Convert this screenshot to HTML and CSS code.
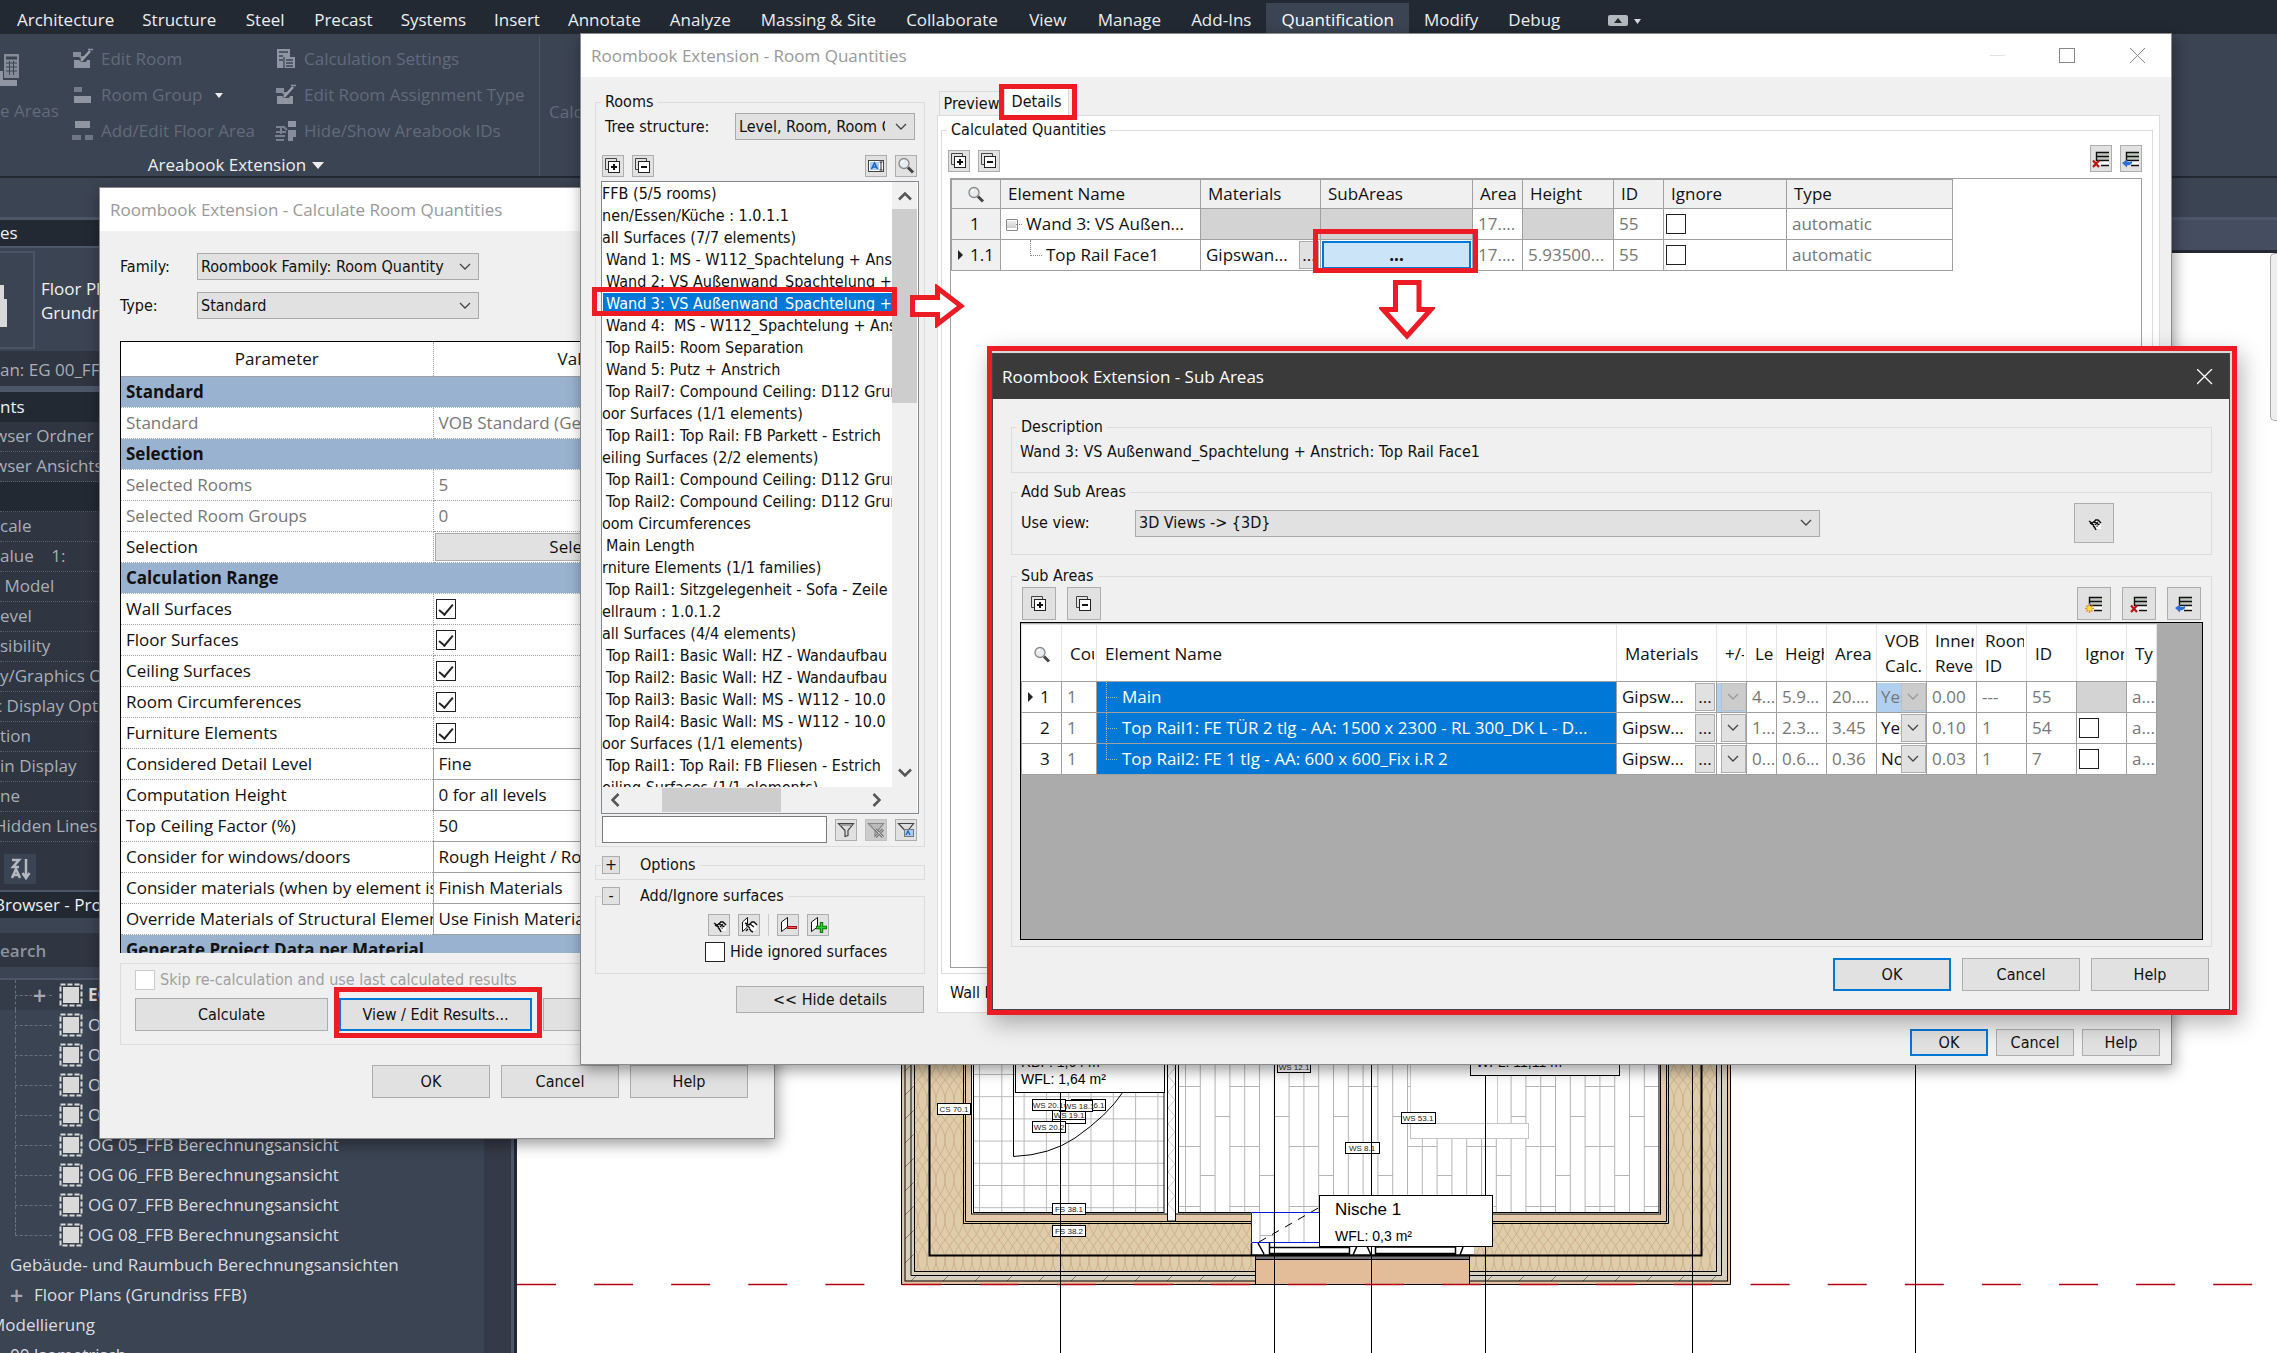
FILE: index.html
```
<!DOCTYPE html>
<html lang="en">
<head>
<meta charset="utf-8">
<title>Roombook Extension</title>
<link rel="stylesheet" href="styles.css">
</head>
<body>
<svg class="sprite" aria-hidden="true">
  <symbol id="i-expand" viewBox="0 0 18 18"><path d="M1.500 12.500V1.500H12.500V4M1.500 12.500H4" fill="none" stroke="#444"/><rect x="4.500" y="4.500" width="11" height="11" fill="#fff" stroke="#222"/><path d="M10 7V13M7 10H13" stroke="#111" stroke-width="2"/></symbol>
  <symbol id="i-collapse" viewBox="0 0 18 18"><path d="M1.500 12.500V1.500H12.500V4M1.500 12.500H4" fill="none" stroke="#444"/><rect x="4.500" y="4.500" width="11" height="11" fill="#fff" stroke="#222"/><path d="M7 10H13" stroke="#111" stroke-width="2"/></symbol>
  <symbol id="i-search" viewBox="0 0 18 18"><path d="M11 10.500L16 15.500" stroke="#444" stroke-width="3"/><circle cx="7" cy="6.500" r="5" fill="#e8ecee" stroke="#888" stroke-width="1.300"/><path d="M4.500 5.500A3 3 0 0 1 7 3.500" fill="none" stroke="#fff" stroke-width="1.500"/></symbol>
  <symbol id="i-rename" viewBox="0 0 18 18"><rect x="1.500" y="3.500" width="15" height="11" fill="#fff" stroke="#444"/><rect x="3" y="5" width="9" height="8" fill="#a8cdf5"/><path d="M4.500 12L7.500 6L10.500 12M5.500 10H9.500" fill="none" stroke="#1b5fc0" stroke-width="1.500"/><path d="M12.500 5H15.500M14 5V13M12.500 13H15.500" fill="none" stroke="#222"/></symbol>
  <symbol id="i-funnel" viewBox="0 0 18 18"><path d="M1.500 2.500H16.500L11 9.500V14.500L8 15.500V9.500Z" fill="#ddd" stroke="#444" stroke-width="1.200"/><path d="M3 4H15" stroke="#888" stroke-width="1.500"/></symbol>
  <symbol id="i-funnel-x" viewBox="0 0 18 18"><path d="M1.500 2.500H16.500L11 9.500V14.500L8 15.500V9.500Z" fill="#bbb" stroke="#888" stroke-width="1.200"/><path d="M8.500 8.500L16 16M16 8.500L8.500 16" stroke="#777" stroke-width="3"/><path d="M8.500 8.500L16 16M16 8.500L8.500 16" stroke="#ccc"/></symbol>
  <symbol id="i-funnel-a" viewBox="0 0 18 18"><path d="M1.500 2.500H16.500L11 9.500L8 13.500V9.500Z" fill="#ddd" stroke="#444" stroke-width="1.200"/><rect x="7.500" y="8.500" width="9" height="7" fill="#a8cdf5" stroke="#777"/><path d="M9 14L11 10L13 14" fill="none" stroke="#1b5fc0" stroke-width="1.300"/></symbol>
  <symbol id="i-hand" viewBox="0 0 18 18"><path d="M5 8L9 6L13 6L16 9V15H11L9 12Z" fill="#fff"/><path d="M4 7L7 9L11 6M5 9L9 11M10 6H13L16 9M8 11L10 14L11 16M10 8L14 11" fill="none" stroke="#111" stroke-width="1.500"/><path d="M10 10L13 13M12 8L15 11M9 8L12 11" fill="none" stroke="#111" stroke-width="1.300" stroke-dasharray="1.300 1"/></symbol>
  <symbol id="i-face-hand" viewBox="0 0 18 18"><path d="M2.500 15.500V6L7.500 1.500V11L2.500 15.500Z" fill="#fff" stroke="#111"/><path d="M6 7L9 9L12 6L16 8L17 12L14 15H10L8 12Z" fill="#fff"/><path d="M5 7L9 9L12 6H14L17 9M6 9L10 12M10 8L14 11M8 13L6 15M9 12L11 15L13 16" fill="none" stroke="#111" stroke-width="1.400"/></symbol>
  <symbol id="i-face-del" viewBox="0 0 18 18"><path d="M2.500 15.500V6L8.500 1.500V11L2.500 15.500Z" fill="#fff" stroke="#111"/><path d="M8 11.500H18" stroke="#a01010" stroke-width="3"/><path d="M9 11.500H17" stroke="#ef5b5b"/></symbol>
  <symbol id="i-face-add" viewBox="0 0 18 18"><path d="M2.500 15.500V6L8.500 1.500V11L2.500 15.500Z" fill="#fff" stroke="#111"/><path d="M7 11.500H18M12.500 6V17" stroke="#087a08" stroke-width="3.400"/><path d="M8 11.500H17M12.500 7V16" stroke="#2fd02f" stroke-width="1.400"/></symbol>
  <symbol id="i-rows" viewBox="0 0 18 18"><rect x="4" y="2" width="13" height="8" fill="#c2c7c0"/><rect x="4" y="10" width="13" height="5" fill="#fff"/><path d="M4.500 11V2.500H17M4.500 6.500H17M4.500 10.500H17M9 15.500H17" fill="none" stroke="#111" stroke-width="1.400"/></symbol>
  <symbol id="i-row-del" viewBox="0 0 18 18"><use href="#i-rows"/><path d="M1 10.500L7 17M7 10.500L1 17" stroke="#c01212" stroke-width="2.200"/></symbol>
  <symbol id="i-row-back" viewBox="0 0 18 18"><use href="#i-rows"/><path d="M0 13L5 9.500V11.500Q9 13 10 10.500Q11 15 5 15.500V17.500Z" fill="#2c6fd6"/></symbol>
  <symbol id="i-row-new" viewBox="0 0 18 18"><use href="#i-rows"/><path d="M4.500 8.500V18M0 13.500H9M1.500 10.500L7.500 16.500M7.500 10.500L1.500 16.500" stroke="#f08a1c" stroke-width="1.400"/><circle cx="4.500" cy="13.500" r="2.200" fill="#ffe23a"/></symbol>
  <symbol id="i-room-edit" viewBox="0 0 22 22"><path d="M1 4H9V8H13L10 12L7 9H1Z" fill="#868d98"/><path d="M2 12H7L9 14H14L15 12H18V20H2Z" fill="#8f96a1"/><path d="M9 13L18 3" fill="none" stroke="#9aa0aa" stroke-width="2.500"/><path d="M16 1.500H21" stroke="#8f96a1" stroke-width="1.500"/></symbol>
  <symbol id="i-room-group" viewBox="0 0 22 22"><path d="M2 3H10V8H2Z" fill="#737b88"/><path d="M2 12H19V19H2Z" fill="#8f96a1"/></symbol>
  <symbol id="i-floor-area" viewBox="0 0 22 22"><path d="M3 1H18V8H3Z" fill="#8f96a1"/><path d="M0 15H9V20H0ZM13 15H21V20H13Z" fill="#6f7785"/></symbol>
  <symbol id="i-calc-set" viewBox="0 0 22 22"><path d="M2 1H15V9H20V20H2Z" fill="#8f96a1"/><path d="M4 4H13M4 8H8M4 12H8M9 9V20M11 12H18M11 15H18M11 18H18" stroke="#3b4453" stroke-width="1.300"/></symbol>
  <symbol id="i-ids" viewBox="0 0 22 22"><path d="M13 1H21V7H13Z" fill="#8f96a1"/><path d="M13 10H21V17H18V21H13Z" fill="#868d98"/><path d="M1 7H9L12 10M1 12H11M0 16H10M1 20H9M6 8V14" fill="none" stroke="#79818d" stroke-width="2"/></symbol>
  <symbol id="i-sheet" viewBox="0 0 24 24"><rect x="1.500" y="1.500" width="21" height="21" fill="none" stroke="#d9d9d9" stroke-width="2" stroke-dasharray="5 2"/><rect x="4" y="4" width="16" height="16" fill="#d9d9d9"/></symbol>
</svg>

<nav class="menubar">
  <a href="#">Architecture</a><a href="#">Structure</a><a href="#">Steel</a><a href="#">Precast</a><a href="#">Systems</a><a href="#">Insert</a><a href="#">Annotate</a><a href="#">Analyze</a><a href="#">Massing &amp; Site</a><a href="#">Collaborate</a><a href="#">View</a><a href="#">Manage</a><a href="#">Add-Ins</a><a href="#" class="on">Quantification</a><a href="#">Modify</a><a href="#">Debug</a>
  <button class="ribbon-toggle" aria-label="Minimize ribbon"><svg width="34" height="14" viewBox="0 0 34 14"><rect x="1" y="1" width="20" height="11" rx="2" fill="#b4b8bf"/><path d="M7 9L11 4L15 9Z" fill="#222933"/><path d="M27 5H34L30.500 10Z" fill="#d5d8dc"/></svg></button>
</nav>

<header class="ribbon">
  <section class="panel">
    <div class="panel-body">
      <div class="big-tool">
        <svg width="22" height="36" viewBox="0 0 22 36"><path d="M0 18H3V27H17V33H0Z" fill="#8f96a1"/><rect x="4" y="1" width="15" height="24" fill="#858c98"/><path d="M6 5H17" stroke="#3b4453" stroke-width="3"/><path d="M6 10H17M6 14H17M6 18H17M9.500 8V22M13.500 8V22" stroke="#3b4453"/></svg>
        <span>e Areas</span>
      </div>
      <div class="tools">
        <button><svg><use href="#i-room-edit"/></svg>Edit Room</button>
        <button><svg><use href="#i-room-group"/></svg>Room Group <i class="caret small"></i></button>
        <button><svg><use href="#i-floor-area"/></svg>Add/Edit Floor Area</button>
      </div>
      <div class="tools">
        <button><svg><use href="#i-calc-set"/></svg>Calculation Settings</button>
        <button><svg><use href="#i-room-edit"/></svg>Edit Room Assignment Type</button>
        <button><svg><use href="#i-ids"/></svg>Hide/Show Areabook IDs</button>
      </div>
    </div>
    <div class="panel-title">Areabook Extension <i class="caret"></i></div>
  </section>
  <section class="panel next"><span>Calc</span></section>
</header>
<div class="optionbar"></div>

<main class="workspace">
  <aside class="dock">
    <h2>es</h2>
    <div class="type-card">
      <div class="thumb"><svg width="8" height="44" viewBox="0 0 8 44"><path d="M0 0H4V14H7V42H0Z" fill="#d9d9d9"/></svg></div>
      <p>Floor Plan<br>Grundriss</p>
    </div>
    <div class="instance">an: EG 00_FFB</div>
    <h2 class="head-tall">nts</h2>
    <ul class="props">
      <li class="scrolled">wser Ordner</li><li class="scrolled">wser Ansichts</li><li class="group"></li><li>cale</li><li>alue&nbsp;&nbsp;&nbsp; 1:</li><li>&nbsp;Model</li><li>evel</li><li>sibility</li><li>y/Graphics O</li><li class="scrolled">c Display Opt</li><li>tion</li><li>in Display</li><li>ne</li><li class="scrolled">Hidden Lines</li>
    </ul>
    <div class="sortbar"><button aria-label="Sort"><svg width="24" height="24" viewBox="0 0 24 24"><path d="M4 3H11L5 10H11M4 21L8 12L12 21M5 18H11" fill="none" stroke="#b4b8bf" stroke-width="2.500"/><path d="M18 2V20M14.500 16L18 21L21.500 16" fill="none" stroke="#b4b8bf" stroke-width="2.500"/></svg></button></div>
    <h2 class="scrolled">Browser - Project</h2>
    <div class="searchbar"><input type="text" value="earch" aria-label="Search"></div>
    <div class="browser">
      <ul class="tree">
        <li class="leaf current"><b class="plus">+</b><svg><use href="#i-sheet"/></svg><b>EG 00_FFB</b></li>
        <li class="leaf"><svg><use href="#i-sheet"/></svg>OG 01_FFB Berechnungsansicht</li>
        <li class="leaf"><svg><use href="#i-sheet"/></svg>OG 02_FFB Berechnungsansicht</li>
        <li class="leaf"><svg><use href="#i-sheet"/></svg>OG 03_FFB Berechnungsansicht</li>
        <li class="leaf"><svg><use href="#i-sheet"/></svg>OG 04_FFB Berechnungsansicht</li>
        <li class="leaf"><svg><use href="#i-sheet"/></svg>OG 05_FFB Berechnungsansicht</li>
        <li class="leaf"><svg><use href="#i-sheet"/></svg>OG 06_FFB Berechnungsansicht</li>
        <li class="leaf"><svg><use href="#i-sheet"/></svg>OG 07_FFB Berechnungsansicht</li>
        <li class="leaf last"><svg><use href="#i-sheet"/></svg>OG 08_FFB Berechnungsansicht</li>
        <li class="l1">Gebäude- und Raumbuch Berechnungsansichten</li>
        <li class="l1"><b class="plus">+</b>Floor Plans (Grundriss FFB)</li>
        <li class="l0">Modellierung</li>
        <li class="l1">00 Isometrisch</li>
      </ul>
      <div class="dock-scroll"></div>
    </div>
  </aside>
  <section class="canvas">
    <div class="viewtabs"></div>
    <div class="navbar"></div>
    <svg class="plan" viewBox="517 1053 1760 300" font-family="Liberation Sans, Arial, sans-serif">
      <defs>
        <pattern id="wool" width="18" height="40" patternUnits="userSpaceOnUse"><rect width="18" height="40" fill="#dfccab"/><path d="M0 0Q9 10 9 20Q9 30 0 40M18 0Q9 10 9 20Q9 30 18 40M9 0Q0 10 0 20Q0 30 9 40M9 0Q18 10 18 20Q18 30 9 40" fill="none" stroke="#cdb28c"/></pattern>
        <pattern id="brick" width="32" height="24" patternUnits="userSpaceOnUse"><rect width="32" height="24" fill="#d7d0bd"/><path d="M0 24L12 12M12 12L20 4" stroke="#8c7a6c"/></pattern>
        <pattern id="tile" x="979" y="1074" width="22.300" height="22.200" patternUnits="userSpaceOnUse"><rect width="22.300" height="22.200" fill="#fff"/><path d="M.5 0V22.200M0 .5H22.300" stroke="#b9b9b9"/></pattern>
        <pattern id="plank" x="1185" y="1064" width="59.200" height="120" patternUnits="userSpaceOnUse"><rect width="59.200" height="120" fill="#fff"/><path d="M.5 0V120M15.300 0V120M30.100 0V120M44.900 0V120M0 82.500H15M15 111.500H30M30 52.500H45M45 82.500H59M0 22.500H15M45 22.500H59" stroke="#b4b4b4"/></pattern>
      </defs>
      <rect x="901" y="1053" width="829.500" height="231" fill="#e6c3a0"/>
      <rect x="905" y="1053" width="822.500" height="228" fill="url(#brick)" stroke="#000"/>
      <path d="M911 1053V1275.500H1721.500V1053" fill="none" stroke="#000"/>
      <rect x="914.500" y="1053" width="802" height="218.500" fill="url(#wool)" stroke="#000"/>
      <path d="M929.500 1053V1255.500H1701.500V1053" fill="none" stroke="#000" stroke-width="2"/>
      <path d="M966 1053H1666V1221H966Z" fill="#e3c9a9"/>
      <path d="M963.500 1053V1223.500H1668.500V1053M965.500 1053V1221.500H1666.500V1053" fill="none" stroke="#000"/>
      <rect x="971.500" y="1053" width="689" height="161" fill="#fff" stroke="#000"/>
      <rect x="973.500" y="1053" width="190.500" height="159.500" fill="url(#tile)" stroke="#000"/>
      <rect x="1178.500" y="1053" width="480.500" height="159.500" fill="url(#plank)" stroke="#000"/>
      <rect x="1167.500" y="1053" width="8" height="168" fill="#fff" stroke="#000"/>
      <path d="M1168 1060L1175 1068L1168 1076L1175 1084L1168 1092L1175 1100L1168 1108L1175 1116L1168 1124L1175 1132L1168 1140L1175 1148L1168 1156L1175 1164L1168 1172L1175 1180L1168 1188L1175 1196L1168 1204L1175 1212" fill="none" stroke="#ccc"/>
      <rect x="1410.500" y="1053" width="87" height="80" fill="#fff" stroke="#ccc"/>
      <rect x="1410.500" y="1123.500" width="118" height="15" fill="#fff" stroke="#c4c4c4"/>
      <path d="M901.500 1053V1284.500H1730.500V1053" fill="none" stroke="#000"/>
      <rect x="1251" y="1212" width="223" height="43" fill="#fff"/>
      <path d="M1260 1213V1242M1274 1213V1242M1289 1213V1242M1304 1213V1242M1260 1235.500H1274" stroke="#b4b4b4"/>
      <path d="M1251.500 1242.500V1212.500H1325M1251.500 1242.500H1325" fill="none" stroke="#0018e8"/>
      <path d="M1259 1242L1320 1207" stroke="#000" stroke-dasharray="8 7"/>
      <path d="M1251.500 1243V1255H1474M1258 1243L1264 1254M1269.500 1242V1255M1269.500 1247.500H1349.500M1269.500 1253.500H1349.500V1247M1357 1246L1353 1255M1367 1246L1371 1255M1375.500 1247V1253.500H1455.500V1247H1375.500M1463 1247L1460 1255" fill="none" stroke="#000" stroke-width="1.500"/>
      <rect x="1255.500" y="1256" width="214" height="28.500" fill="#e3bd9a" stroke="#000"/>
      <rect x="1255.500" y="1256" width="214" height="3.500" fill="#777" stroke="#000"/>
      <path d="M517 1284.500H2277" stroke="#b00010" stroke-width="1.500" stroke-dasharray="39 38.100"/>
      <path d="M1013.500 1053V1156.500Q1050 1155 1075 1138Q1108 1115 1123 1092" fill="none" stroke="#000"/>
      <rect x="1015.500" y="1043" width="149" height="49.500" fill="#fff" stroke="#000"/>
      <rect x="1470.500" y="1043" width="149" height="32.500" fill="#fff" stroke="#000"/>
      <g font-size="14"><text x="1021" y="1067">RBF: 1,64 m²</text><text x="1021" y="1084">WFL: 1,64 m²</text><text x="1476" y="1067">WFL: 11,11 m²</text></g>
      <g fill="#fff" stroke="#000">
        <rect x="937.500" y="1103.500" width="33" height="11"/><rect x="1052.500" y="1112.500" width="33" height="11"/><rect x="1052.500" y="1108.500" width="33" height="11"/><rect x="1071.500" y="1099.500" width="34" height="11"/><rect x="1059.500" y="1100.500" width="33" height="11"/><rect x="1032.500" y="1099.500" width="33" height="11"/><rect x="1032.500" y="1121.500" width="33" height="11"/><rect x="1052.500" y="1203.500" width="33" height="11"/><rect x="1052.500" y="1225.500" width="33" height="11"/><rect x="1277.500" y="1061.500" width="33" height="11"/><rect x="1345.500" y="1142.500" width="34" height="11"/><rect x="1401.500" y="1112.500" width="34" height="11"/>
      </g>
      <g font-size="8" text-anchor="middle" fill="#222"><text x="954" y="1112">CS 70.1</text><text x="1069" y="1118">WS 19.1</text><text x="1099" y="1108">6.1</text><text x="1079" y="1109">WS 18.1</text><text x="1048" y="1108">WS 20.1</text><text x="1049" y="1130">WS 20.2</text><text x="1069" y="1212">FS 38.1</text><text x="1069" y="1234">FS 38.2</text><text x="1294" y="1070">WS 12.1</text><text x="1362" y="1151">WS 8.1</text><text x="1418" y="1121">WS 53.1</text></g>
      <path d="M1060.500 1093V1353M1274.500 1053V1353M1371.500 1053V1353M1485.500 1076V1353M1692.500 1053V1353M1915.500 1053V1353" stroke="#000"/>
      <rect x="1319.500" y="1195.500" width="173" height="51" fill="#fff" stroke="#000"/>
      <text x="1335" y="1215" font-size="17">Nische 1</text><text x="1335" y="1241" font-size="14">WFL: 0,3 m²</text>
    </svg>
  </section>
</main>

<section class="window calc">
  <header class="titlebar">Roombook Extension - Calculate Room Quantities</header>
  <div class="calc-body">
    <div class="form-row"><label for="family">Family:</label><select id="family"><option>Roombook Family: Room Quantity</option></select></div>
    <div class="form-row"><label for="type">Type:</label><select id="type"><option>Standard</option></select></div>
    <div class="param-box">
      <table class="params">
        <thead><tr><th>Parameter</th><th>Value</th></tr></thead>
        <tbody>
          <tr class="band"><th colspan="2">Standard</th></tr>
          <tr class="off"><td>Standard</td><td>VOB Standard (Germany)</td></tr>
          <tr class="band"><th colspan="2">Selection</th></tr>
          <tr class="off"><td>Selected Rooms</td><td>5</td></tr>
          <tr class="off"><td>Selected Room Groups</td><td>0</td></tr>
          <tr><td>Selection</td><td class="fill"><button>Select...</button></td></tr>
          <tr class="band"><th colspan="2">Calculation Range</th></tr>
          <tr><td><label for="c1">Wall Surfaces</label></td><td class="tick"><input type="checkbox" id="c1" checked></td></tr>
          <tr><td><label for="c2">Floor Surfaces</label></td><td class="tick"><input type="checkbox" id="c2" checked></td></tr>
          <tr><td><label for="c3">Ceiling Surfaces</label></td><td class="tick"><input type="checkbox" id="c3" checked></td></tr>
          <tr><td><label for="c4">Room Circumferences</label></td><td class="tick"><input type="checkbox" id="c4" checked></td></tr>
          <tr><td><label for="c5">Furniture Elements</label></td><td class="tick"><input type="checkbox" id="c5" checked></td></tr>
          <tr><td>Considered Detail Level</td><td class="combo">Fine</td></tr>
          <tr><td>Computation Height</td><td class="combo">0 for all levels</td></tr>
          <tr><td>Top Ceiling Factor (%)</td><td>50</td></tr>
          <tr><td>Consider for windows/doors</td><td class="combo">Rough Height / Rough Width</td></tr>
          <tr><td>Consider materials (when by element is</td><td class="combo">Finish Materials</td></tr>
          <tr><td>Override Materials of Structural Elements</td><td class="combo">Use Finish Materials</td></tr>
          <tr class="band"><th colspan="2">Generate Project Data per Material</th></tr>
        </tbody>
      </table>
    </div>
    <fieldset class="run">
      <label class="check off"><input type="checkbox" disabled>Skip re-calculation and use last calculated results</label>
      <div class="run-buttons">
        <button class="btn">Calculate</button>
        <div class="marked"><button class="btn primary">View / Edit Results...</button><i class="mark"></i></div>
        <button class="btn" aria-label="Export"></button>
      </div>
    </fieldset>
    <footer class="actions"><button class="btn">OK</button><button class="btn">Cancel</button><button class="btn">Help</button></footer>
  </div>
</section>

<section class="window rooms">
  <header class="titlebar">Roombook Extension - Room Quantities
    <div class="controls"><svg width="156" height="16" viewBox="0 0 156 16" fill="none"><path d="M0 7.500H15" stroke="#e2e2e2"/><rect x="69.500" y=".5" width="15" height="14" stroke="#888"/><path d="M140 0L155 15M155 0L140 15" stroke="#888"/></svg></div>
  </header>
  <div class="rooms-body">
    <div class="side">
      <fieldset class="room-list">
        <legend>Rooms</legend>
        <div class="form-row"><label for="structure">Tree structure:</label><select id="structure"><option>Level, Room, Room Category</option></select></div>
        <div class="toolbar">
          <button class="icon" aria-label="Expand all"><svg><use href="#i-expand"/></svg></button>
          <button class="icon" aria-label="Collapse all"><svg><use href="#i-collapse"/></svg></button>
          <span class="push"></span>
          <button class="icon" aria-label="Rename"><svg><use href="#i-rename"/></svg></button>
          <button class="icon" aria-label="Search"><svg><use href="#i-search"/></svg></button>
        </div>
        <div class="listbox">
          <ul>
            <li class="up">FFB (5/5 rooms)</li><li class="up">nen/Essen/Küche : 1.0.1.1</li><li class="up">all Surfaces (7/7 elements)</li>
            <li>Wand 1: MS - W112_Spachtelung + Anstrich</li><li>Wand 2: VS Außenwand_Spachtelung + Anstrich</li><li class="sel"><span>Wand 3: VS Außenwand_Spachtelung + Anstrich</span></li><li>Wand 4:&nbsp; MS - W112_Spachtelung + Anstrich</li>
            <li>Top Rail5: Room Separation</li><li>Wand 5: Putz + Anstrich</li><li>Top Rail7: Compound Ceiling: D112 Grundputz</li>
            <li class="up">oor Surfaces (1/1 elements)</li><li>Top Rail1: Top Rail: FB Parkett - Estrich</li>
            <li class="up">eiling Surfaces (2/2 elements)</li><li>Top Rail1: Compound Ceiling: D112 Grundputz</li><li>Top Rail2: Compound Ceiling: D112 Grundputz</li>
            <li class="up">oom Circumferences</li><li>Main Length</li><li class="up">rniture Elements (1/1 families)</li><li>Top Rail1: Sitzgelegenheit - Sofa - Zeile</li>
            <li class="up">ellraum : 1.0.1.2</li><li class="up">all Surfaces (4/4 elements)</li>
            <li>Top Rail1: Basic Wall: HZ - Wandaufbau</li><li>Top Rail2: Basic Wall: HZ - Wandaufbau</li><li>Top Rail3: Basic Wall: MS - W112 - 10.0</li><li>Top Rail4: Basic Wall: MS - W112 - 10.0</li>
            <li class="up">oor Surfaces (1/1 elements)</li><li>Top Rail1: Top Rail: FB Fliesen - Estrich</li><li class="up">eiling Surfaces (1/1 elements)</li>
          </ul>
          <div class="vscroll"><svg width="14" height="9" viewBox="0 0 14 9"><path d="M1 7.500L7 1.500L13 7.500" fill="none" stroke="#555" stroke-width="2.500"/></svg><i></i><svg width="14" height="9" viewBox="0 0 14 9"><path d="M1 1.500L7 7.500L13 1.500" fill="none" stroke="#555" stroke-width="2.500"/></svg></div>
          <div class="hscroll"><svg width="9" height="14" viewBox="0 0 9 14"><path d="M7.500 1L1.500 7L7.500 13" fill="none" stroke="#555" stroke-width="2.500"/></svg><i></i><svg width="9" height="14" viewBox="0 0 9 14"><path d="M1.500 1L7.500 7L1.500 13" fill="none" stroke="#555" stroke-width="2.500"/></svg></div>
        </div>
        <div class="filter"><input type="text" aria-label="Filter rooms">
          <button class="icon" aria-label="Filter"><svg><use href="#i-funnel"/></svg></button>
          <button class="icon dim" aria-label="Clear filter"><svg><use href="#i-funnel-x"/></svg></button>
          <button class="icon" aria-label="Filter by name"><svg><use href="#i-funnel-a"/></svg></button>
        </div>
      </fieldset>
      <fieldset class="fold"><legend><button class="toggle">+</button>Options</legend></fieldset>
      <fieldset class="fold open"><legend><button class="toggle">-</button>Add/Ignore surfaces</legend>
        <div class="toolbar">
          <button class="icon" aria-label="Pick"><svg><use href="#i-hand"/></svg></button>
          <button class="icon" aria-label="Pick face"><svg><use href="#i-face-hand"/></svg></button>
          <hr>
          <button class="icon" aria-label="Remove face"><svg><use href="#i-face-del"/></svg></button>
          <button class="icon" aria-label="Add face"><svg><use href="#i-face-add"/></svg></button>
        </div>
        <label class="check"><input type="checkbox">Hide ignored surfaces</label>
      </fieldset>
      <button class="btn hide-details">&lt;&lt; Hide details</button>
    </div>
    <div class="details">
      <div class="tabs"><button>Preview</button><button class="on">Details</button><i class="mark"></i></div>
      <div class="tabpage">
        <fieldset class="quantities">
          <legend>Calculated Quantities</legend>
          <div class="toolbar">
            <button class="icon" aria-label="Expand all"><svg><use href="#i-expand"/></svg></button>
            <button class="icon" aria-label="Collapse all"><svg><use href="#i-collapse"/></svg></button>
            <span class="push"></span>
            <button class="icon tall" aria-label="Delete row"><svg><use href="#i-row-del"/></svg></button>
            <button class="icon tall" aria-label="Reset row"><svg><use href="#i-row-back"/></svg></button>
          </div>
          <div class="sheet">
            <table class="grid qty">
              <colgroup><col class="w-no"><col class="w-name"><col class="w-mat"><col class="w-sub"><col class="w-s"><col class="w-height"><col class="w-s"><col class="w-ign"><col class="w-type"></colgroup>
              <thead><tr><th class="mid"><svg class="glass"><use href="#i-search"/></svg></th><th>Element Name</th><th>Materials</th><th>SubAreas</th><th>Area</th><th>Height</th><th>ID</th><th>Ignore</th><th>Type</th></tr></thead>
              <tbody>
                <tr><th>1</th><td class="ink node">Wand 3: VS Außen...</td><td class="na"></td><td class="na"></td><td>17....</td><td class="na"></td><td>55</td><td class="tick"><input type="checkbox" aria-label="Ignore 1"></td><td>automatic</td></tr>
                <tr><th class="cur">1.1</th><td class="ink child">Top Rail Face1</td><td class="ink"><div class="with-btn">Gipswan...<button>...</button></div></td><td class="fill"><button class="sub">...</button></td><td>17....</td><td>5.93500...</td><td>55</td><td class="tick"><input type="checkbox" aria-label="Ignore 1.1"></td><td>automatic</td></tr>
              </tbody>
            </table>
          </div>
        </fieldset>
        <p class="status">Wall Height</p>
      </div>
    </div>
  </div>
  <footer class="actions"><button class="btn primary">OK</button><button class="btn">Cancel</button><button class="btn">Help</button></footer>
</section>

<i class="mark mark-row"></i>
<i class="mark mark-sub"></i>
<svg class="arrow arrow-right" width="58" height="44" viewBox="0 0 58 44"><path d="M5.500 13.500H30.500V4L54 22L30.500 40V30.500H5.500Z" fill="#fff" stroke="#ed1c24" stroke-width="5"/></svg>
<svg class="arrow arrow-down" width="56" height="62" viewBox="0 0 56 62"><path d="M16.500 4.500H40V31.500H52L28 58L4 31.500H16.500Z" fill="#fff" stroke="#ed1c24" stroke-width="5"/></svg>

<div class="callout">
<section class="window sub-areas">
  <header class="titlebar">Roombook Extension - Sub Areas<svg width="16" height="16" viewBox="0 0 16 16"><path d="M0 0L15 15M15 0L0 15" stroke="#fff" stroke-width="1.300"/></svg></header>
  <div class="sub-body">
    <fieldset class="desc"><legend>Description</legend><p>Wand 3: VS Außenwand_Spachtelung + Anstrich: Top Rail Face1</p></fieldset>
    <fieldset class="add"><legend>Add Sub Areas</legend>
      <div class="add-row"><label for="view">Use view:</label><select id="view"><option>3D Views -&gt; {3D}</option></select><button class="icon big" aria-label="Pick"><svg><use href="#i-hand"/></svg></button></div>
    </fieldset>
    <fieldset class="areas"><legend>Sub Areas</legend>
      <div class="toolbar">
        <button class="icon mid-size" aria-label="Expand all"><svg><use href="#i-expand"/></svg></button>
        <button class="icon mid-size" aria-label="Collapse all"><svg><use href="#i-collapse"/></svg></button>
        <span class="push"></span>
        <button class="icon mid-size" aria-label="New row"><svg><use href="#i-row-new"/></svg></button>
        <button class="icon mid-size" aria-label="Delete row"><svg><use href="#i-row-del"/></svg></button>
        <button class="icon mid-size" aria-label="Reset row"><svg><use href="#i-row-back"/></svg></button>
      </div>
      <div class="area-sheet">
        <table class="grid area-table">
          <colgroup><col class="w-idx"><col class="w-cnt"><col class="w-long"><col class="w-matl"><col class="w-sign"><col class="w-sign"><col class="w-s"><col class="w-s"><col class="w-s"><col class="w-s"><col class="w-s"><col class="w-s"><col class="w-s"><col class="w-end"></colgroup>
          <thead><tr><th class="mid"><svg class="glass"><use href="#i-search"/></svg></th><th><div>Count</div></th><th><div>Element Name</div></th><th><div>Materials</div></th><th><div>+/-</div></th><th><div>Length</div></th><th><div>Height</div></th><th><div>Area</div></th><th><div>VOB<br>Calc.</div></th><th><div>Inner<br>Reveal</div></th><th><div>Room<br>ID</div></th><th><div>ID</div></th><th><div>Ignore</div></th><th><div>Type</div></th></tr></thead>
          <tbody>
            <tr><th class="cur">1</th><td>1</td><td class="blue">Main</td><td class="ink"><div class="with-btn">Gipsw...<button>...</button></div></td><td class="pick"><select disabled aria-label="Sign"><option>&nbsp;</option></select></td><td>4...</td><td>5.9...</td><td>20....</td><td class="pick"><select disabled aria-label="VOB"><option>Yes</option></select></td><td>0.00</td><td>---</td><td>55</td><td class="na"></td><td>a...</td></tr>
            <tr><th>2</th><td>1</td><td class="blue">Top Rail1: FE TÜR 2 tlg - AA: 1500 x 2300 - RL 300_DK L - D...</td><td class="ink"><div class="with-btn">Gipsw...<button>...</button></div></td><td class="pick"><select aria-label="Sign"><option>&nbsp;</option></select></td><td>1...</td><td>2.3...</td><td>3.45</td><td class="pick"><select aria-label="VOB"><option>Yes</option></select></td><td>0.10</td><td>1</td><td>54</td><td class="tick"><input type="checkbox" aria-label="Ignore 2"></td><td>a...</td></tr>
            <tr><th>3</th><td>1</td><td class="blue end">Top Rail2: FE 1 tlg - AA: 600 x 600_Fix i.R 2</td><td class="ink"><div class="with-btn">Gipsw...<button>...</button></div></td><td class="pick"><select aria-label="Sign"><option>&nbsp;</option></select></td><td>0...</td><td>0.6...</td><td>0.36</td><td class="pick"><select aria-label="VOB"><option>No</option></select></td><td>0.03</td><td>1</td><td>7</td><td class="tick"><input type="checkbox" aria-label="Ignore 3"></td><td>a...</td></tr>
          </tbody>
        </table>
      </div>
    </fieldset>
    <footer class="actions"><button class="btn primary">OK</button><button class="btn">Cancel</button><button class="btn">Help</button></footer>
  </div>
</section>
</div>
</body>
</html>
```
FILE: styles.css
```
:root {
  --segoe: "Open Sans", "Noto Sans", sans-serif;
  --tahoma: "DejaVu Sans Condensed", "DejaVu Sans", sans-serif;
  --ink: #111;
  --navy: #222933;
  --slate: #3b4453;
  --deep: #2f3541;
  --edge: #4c586a;
  --face: #f0f0f0;
  --red: #ed1c24;
  --blue: #0078d7;
  --line: #a0a0a0;
}
* { box-sizing: border-box; }
html, body { height: 100%; }
body { margin: 0; display: flex; flex-direction: column; position: relative; overflow: hidden; background: #fff; font: 17px/22px var(--segoe); color: var(--ink); }
ul { list-style: none; margin: 0; padding: 0; }
p { margin: 0; }
button, select, input { font: inherit; color: inherit; margin: 0; }
button { padding: 0; border: 0; background: none; }
a { color: inherit; text-decoration: none; }
.sprite { position: absolute; width: 0; height: 0; }

/* application frame */
.menubar { flex: none; height: 34px; display: flex; padding: 3px 0 0 3px; background: var(--navy); color: #eceef0; }
.menubar a { padding: 6px 14px 0; white-space: nowrap; min-width: 70px; text-align: center; }
.menubar a:nth-child(n+8) { padding: 6px 15px 0; }
.menubar .on { background: var(--slate); color: #fff; }
.ribbon-toggle { margin-left: 32px; display: flex; align-items: center; padding-top: 4px; }
.ribbon { flex: none; height: 144px; display: flex; background: var(--slate); border-bottom: 2px solid var(--navy); color: #626b79; }
.panel { width: 540px; margin-top: 2px; border-right: 1px solid #4b5565; }
.panel-body { display: flex; height: 112px; padding-top: 5px; }
.big-tool { width: 72px; padding-top: 12px; display: flex; flex-direction: column; gap: 11px; }
.tools { width: 203px; }
.tools button { display: flex; align-items: center; gap: 7px; height: 36px; white-space: nowrap; }
.tools svg { width: 22px; height: 22px; }
.caret { border: 6px solid transparent; border-top: 7px solid #eee; border-bottom: 0; margin-left: 6px; }
.caret.small { border-width: 5px 4px 0; }
.panel-title { display: flex; align-items: center; justify-content: center; padding-right: 67px; height: 34px; color: #eceef0; }
.panel.next { border: 0; padding: 65px 0 0 9px; }
.optionbar { flex: none; height: 42px; background: var(--slate); border-bottom: 3px solid var(--edge); }
.workspace { flex: 1; min-height: 0; display: flex; }

/* docked palettes */
.dock { width: 517px; flex: none; display: flex; flex-direction: column; overflow: hidden; background: var(--slate); border-right: 3px solid var(--navy); box-shadow: inset -3px 0 var(--edge); color: #a9aeb7; }
.dock h2 { flex: none; margin: 0; height: 26px; font: inherit; line-height: 26px; background: var(--navy); color: #f0f1f3; white-space: nowrap; }
.dock .head-tall { height: 30px; line-height: 30px; }
.dock .scrolled { text-indent: -6px; }
.type-card { flex: none; display: flex; height: 105px; border-top: 2px solid var(--edge); padding: 3px 0 2px; }
.thumb { width: 35px; border: 2px solid #4b5565; border-left: 0; display: flex; align-items: center; padding-top: 14px; }
.type-card p { padding: 26px 0 0 6px; line-height: 24px; color: #f0f1f3; }
.instance { flex: none; height: 41px; padding-top: 8px; background: var(--deep); border-bottom: 6px solid var(--edge); }
.props { flex: none; }
.props li { height: 30px; line-height: 28px; background: var(--deep); border-bottom: 1px dotted #565e6c; white-space: nowrap; }
.props .group { background: var(--navy); }
.sortbar { flex: none; height: 50px; padding: 12px 4px 6px; background: var(--deep); border-bottom: 2px solid var(--edge); }
.sortbar button { width: 32px; height: 30px; background: var(--slate); display: grid; place-items: center; }
.searchbar { flex: none; height: 62px; padding: 15px 0 12px; border-bottom: 2px solid #4b5565; }
.searchbar input { width: 484px; height: 34px; border: 0; padding: 0; background: var(--deep); color: #8d939d; font-weight: 600; }
.browser { display: flex; flex: 1; padding-right: 3px; }
.tree { flex: 1; color: #dadde1; }
.tree li { height: 30px; display: flex; align-items: center; white-space: nowrap; }
.tree .leaf { position: relative; padding-left: 59px; gap: 5px; }
.tree .leaf svg { width: 24px; height: 24px; }
.tree .leaf::before { content: ""; position: absolute; left: 15px; top: 0; width: 37px; height: 15px; border-bottom: 1px dashed #667080; }
.tree .leaf::after { content: ""; position: absolute; left: 15px; top: 0; height: 30px; border-left: 1px dashed #667080; }
.tree .last::after { height: 15px; }
.tree .current { background: #343c49; }
.plus { font: bold 20px/20px var(--tahoma); color: #a3a9b3; }
.leaf .plus { position: absolute; left: 32px; background: #343c49; z-index: 1; }
.tree .l1 { padding-left: 10px; }
.l1 .plus { width: 25px; margin-left: -1px; }
.tree .l0 { text-indent: -10px; }
.dock-scroll { width: 27px; background: #343a47; }
.canvas { flex: 1; min-width: 0; display: flex; flex-direction: column; position: relative; }
.viewtabs { flex: none; height: 33px; background: #454d61; border-bottom: 3px solid var(--navy); }
.navbar { align-self: flex-end; width: 7px; height: 168px; border: 1px solid #aaa; border-right: 0; border-radius: 5px 0 0 5px; background: #eee; }
.plan { display: block; width: 100%; margin-top: auto; }

/* dialogs */
.window { background: var(--face); border: 1px solid #8b8b8b; box-shadow: 2px 5px 14px rgba(0, 0, 0, .4); font: 16px/22px var(--tahoma); }
.titlebar { display: flex; align-items: center; justify-content: space-between; height: 43px; padding-left: 10px; background: #fff; color: #999; font: 17px/22px var(--segoe); }
.calc { position: absolute; left: 99px; top: 187px; width: 676px; }
.rooms { position: absolute; left: 580px; top: 33px; width: 1592px; }
.calc-body { padding: 22px 22px 40px 20px; }
.form-row { display: flex; align-items: center; }
.calc .form-row { margin-bottom: 12px; }
.calc .form-row label { width: 77px; }
.calc .form-row select { width: 282px; }
select { appearance: none; height: 27px; padding: 0 22px 0 3px; border: 1px solid #a9a9a9; border-radius: 0; opacity: 1; background: #e1e1e1 url("data:image/svg+xml,%3Csvg xmlns='http://www.w3.org/2000/svg' width='12' height='8'%3E%3Cpath d='M1 1L6 6L11 1' fill='none' stroke='%23444' stroke-width='1.300'/%3E%3C/svg%3E") no-repeat right 7px center; }
input[type="checkbox"] { appearance: none; flex: none; width: 20px; height: 20px; border: 1px solid #222; background: #fff; display: grid; place-items: center; }
input[type="checkbox"]:checked::before { content: ""; width: 6px; height: 12px; border: solid #222; border-width: 0 2px 2px 0; rotate: 40deg; translate: 0 -1px; }
input[type="checkbox"]:disabled { border-color: #ccc; }
.btn { height: 33px; border: 1px solid #adadad; background: #e1e1e1; white-space: nowrap; }
.btn.primary { border: 2px solid var(--blue); }
.check { display: flex; align-items: center; gap: 5px; white-space: nowrap; }
.check.off { color: #a0a0a0; }
fieldset { margin: 0; padding: 0; min-width: 0; border: 1px solid #dcdcdc; }
legend { margin-left: 5px; padding: 0 4px; }
.mark { position: absolute; border: 5px solid var(--red); pointer-events: none; }

.param-box { height: 612px; margin-top: 22px; padding-right: 25px; overflow: hidden; border: 1px solid #000; border-bottom: 0; background: #fff; }
.params { width: 100%; border-collapse: collapse; table-layout: fixed; font: 17px/22px var(--segoe); }
.params tr { height: 31px; }
.params thead tr { height: 34px; }
.params th, .params td { padding: 0 5px; border-bottom: 1px dotted var(--line); white-space: nowrap; overflow: hidden; text-align: left; }
.params thead th { text-align: center; font-weight: 400; border-bottom: 1px solid var(--line); }
.params th:first-child, .params td:first-child { border-right: 1px dotted var(--line); width: 312px; }
.params .band th { background: #99b2d0; font-weight: 700; border-color: #99b2d0; }
.params .off { color: #777; }
.params td.fill { padding: 1px; }
.fill button { width: 100%; height: 28px; border: 1px solid #adadad; background: #e1e1e1; display: block; }
.params td.tick, .grid td.tick { padding: 0 2px; }
.params td.combo { border: 1px solid var(--line); border-right: 0; }
.run { margin-top: 10px; padding: 5px 14px 13px; }
.run-buttons { display: flex; gap: 11px; margin-top: 7px; }
.run-buttons .btn { width: 193px; }
.run-buttons > .btn:last-child { flex: 1; min-width: 0; }
.marked { position: relative; }
.marked .mark { inset: -11px -10px -7px -5px; }
.actions { display: flex; justify-content: flex-end; gap: 11px; }
.actions .btn { width: 118px; }
.calc .actions { margin: 20px 4px 0 0; }

/* room quantities dialog */
.controls { display: flex; padding-right: 25px; }
.rooms-body { display: flex; gap: 12px; padding: 11px 11px 0 14px; }
.side { width: 330px; flex: none; padding-top: 3px; display: flex; flex-direction: column; }
.side fieldset { padding: 0 5px 3px; }
.side legend { margin-left: 0; }
.room-list .form-row { justify-content: space-between; padding: 0 4px; }
.room-list select { width: 180px; padding-right: 29px; }
.toolbar { display: flex; gap: 8px; align-items: flex-end; }
.push { flex: 1; }
.icon { width: 22px; height: 22px; flex: none; display: grid; place-items: center; border: 1px solid #adadad; background: #e1e1e1; }
.icon svg, .glass { width: 18px; height: 18px; }
.icon.dim { background: #ccc; border-color: #bfbfbf; }
.icon.tall { height: 27px; }
.icon.big { width: 40px; height: 40px; }
.icon.mid-size { width: 34px; height: 33px; }
.room-list .toolbar { padding: 15px 2px 0 1px; }
.listbox { display: grid; grid-template-columns: 1fr 25px; grid-template-rows: 605px 26px; margin-top: 4px; border: 1px solid #828790; background: #fff; padding-right: 1px; }
.listbox ul { min-width: 0; overflow: hidden; padding-top: 1px; }
.listbox li { height: 22px; padding-left: 4px; white-space: nowrap; overflow: hidden; }
.listbox .up { padding-left: 0; }
.listbox .sel { padding-left: 1px; }
.sel span { display: block; height: 19px; line-height: 22px; padding-left: 3px; background: var(--blue); color: #fff; }
.vscroll { display: flex; flex-direction: column; align-items: center; background: var(--face); padding: 10px 0; }
.vscroll i { width: 100%; height: 194px; margin: 8px 0 auto; background: #cdcdcd; }
.hscroll { grid-column: 1 / 3; display: flex; align-items: center; background: var(--face); padding: 0 36px 0 9px; }
.hscroll i { width: 119px; height: 24px; margin: 0 auto 0 42px; background: #cdcdcd; }
.filter { display: flex; align-items: center; gap: 8px; margin-top: 2px; padding: 0 2px 0 1px; }
.filter input { flex: 1; min-width: 0; height: 27px; border: 1px solid #7a7a7a; background: #fff; }
.fold { margin-top: 7px; }
.side .fold legend { display: flex; align-items: center; gap: 20px; padding-left: 1px; }
.toggle { width: 18px; height: 18px; line-height: 14px; border: 1px solid #adadad; background: #e1e1e1; }
.fold.open { margin-top: 5px; }
.side .fold.open { padding-bottom: 10px; }
.fold.open .toolbar { padding: 7px 0 0 107px; }
.fold hr { width: 1px; height: 22px; margin: 0; border: 0; background: #ccc; }
.fold .check { padding: 5px 0 0 104px; }
.hide-details { width: 188px; height: 27px; margin: 12px 1px 0 0; align-self: flex-end; }
.details { flex: 1; min-width: 0; display: flex; flex-direction: column; }
.tabs { position: relative; display: flex; align-items: flex-end; padding-left: 2px; }
.tabs button { width: 65px; height: 24px; border: 1px solid #d9d9d9; border-bottom: 0; background: var(--face); }
.tabs .on { height: 27px; background: #fff; }
.tabs .mark { left: 62px; top: -4px; width: 78px; height: 36px; }
.tabpage { flex: 1; border: 1px solid #dcdcdc; background: #fff; padding: 3px 6px 0 3px; }
.quantities { padding: 4px 10px 5px 6px; }
.quantities legend { margin-left: -1px; }
.sheet { height: 790px; margin: 6px 0 0 2px; border: 1px solid var(--line); }
.status { padding: 8px 9px; }
.rooms > .actions { padding: 16px 11px 8px; gap: 8px; }
.rooms > .actions .btn { width: 78px; height: 27px; }

/* data grids */
.grid { border-collapse: collapse; table-layout: fixed; font: 17px/22px var(--segoe); width: 0; color: #777; background: #fff; }
.grid tr { height: 31px; }
.grid th, .grid td { border: 1px solid var(--line); padding: 0 5px; white-space: nowrap; overflow: hidden; text-align: left; font-weight: 400; }
.grid th { background: var(--face); color: var(--ink); }
.grid thead th { padding: 0 0 0 7px; }
.grid tbody th { position: relative; padding: 0 0 0 18px; }
.grid thead .mid { text-align: center; padding: 0; }
.glass { display: inline-block; vertical-align: middle; }
.grid .cur::before { content: ""; position: absolute; left: 6px; top: 10px; border: 5px solid transparent; border-left-color: #222; border-right: 0; }
.grid .ink { color: var(--ink); }
.grid .na { background: #d3d3d3; }
.qty thead tr { height: 29px; }
.grid .node { padding-left: 25px; background: linear-gradient(#eee, #ccc) 6px 12px / 9px 7px no-repeat; position: relative; }
.node::before { content: ""; position: absolute; left: 5px; top: 10px; width: 10px; height: 10px; border: 1px solid #888; border-radius: 1px; }
.node::after { content: ""; position: absolute; left: 15px; top: 15px; width: 6px; border-top: 1px dotted #888; }
.grid .child { padding-left: 45px; position: relative; }
.child::before { content: ""; position: absolute; left: 29px; top: 0; width: 11px; height: 15px; border: dotted #888; border-width: 0 0 1px 1px; }
.with-btn { display: flex; justify-content: space-between; align-items: center; margin-right: -4px; }
.with-btn button { width: 20px; height: 28px; border: 1px solid #adadad; background: #e1e1e1; }
.grid .fill { padding: 1px; }
.fill .sub { border: 2px solid var(--blue); background: #cce4f7; font-weight: 700; color: var(--ink); }
.w-no { width: 49px; } .w-name { width: 200px; } .w-mat { width: 120px; } .w-sub { width: 152px; } .w-s { width: 50px; } .w-height { width: 91px; } .w-ign { width: 123px; } .w-type { width: 166px; }
.w-idx { width: 40px; } .w-cnt { width: 35px; } .w-long { width: 520px; } .w-matl { width: 100px; } .w-sign { width: 30px; } .w-end { width: 30px; }

/* annotations */
.mark-row { left: 592px; top: 287px; width: 305px; height: 29px; }
.mark-sub { left: 1313px; top: 229px; width: 165px; height: 44px; }
.arrow { position: absolute; }
.arrow-right { left: 907px; top: 284px; }
.arrow-down { left: 1379px; top: 278px; }
.callout { position: absolute; left: 987px; top: 346px; width: 1250px; border: 5px solid var(--red); padding: 2px 2px 0 0; background: #d8d8d8; box-shadow: 4px 8px 22px rgba(0, 0, 0, .3); }

/* sub areas dialog */
.sub-areas { border-color: #444; box-shadow: none; }
.sub-areas .titlebar { height: 45px; padding: 0 16px 0 9px; background: #3a3a3a; color: #fff; }
.sub-body { padding: 17px 17px 18px 18px; }
.desc p { padding: 3px 8px 9px; }
.add { margin-top: 8px; }
.add-row { display: flex; align-items: center; padding: 0 97px 11px 9px; }
.add-row label { width: 114px; }
.add-row select { flex: 1; margin-right: 254px; }
.areas { margin-top: 10px; padding: 0 8px 6px; }
.areas legend { margin-left: -3px; }
.areas .toolbar { gap: 11px; padding: 0 2px; }
.area-sheet { height: 318px; margin-top: 2px; padding-top: 1px; border: 1px solid #000; background: #ababab; }
.area-table thead tr { height: 57px; }
.area-table thead th { background: #fff; line-height: 25px; border-left-color: #e5e5e5; border-right-color: #e5e5e5; border-top-color: #e5e5e5; }
.area-table thead div { overflow: hidden; margin: 0 2px 0 1px; }
.area-table tbody th { background: #fff; }
.grid .blue { background: var(--blue); color: #fff; padding-left: 25px; position: relative; }
.blue::before { content: ""; position: absolute; left: 9px; top: 0; height: 31px; border-left: 1px dotted #9bb; }
.blue.end::before { height: 15px; }
.blue::after { content: ""; position: absolute; left: 9px; top: 15px; width: 11px; border-top: 1px dotted #9bb; }
.grid .pick { padding: 0; }
.pick select { display: block; width: 100%; height: 29px; padding: 0 25px 0 4px; border: 0; color: var(--ink); background-color: #fff; background-image: url("data:image/svg+xml,%3Csvg xmlns='http://www.w3.org/2000/svg' width='25' height='28'%3E%3Crect x='.5' y='.5' width='24' height='27' fill='%23e1e1e1' stroke='%23adadad'/%3E%3Cpath d='M7 11L12 16L17 11' fill='none' stroke='%23444' stroke-width='1.300'/%3E%3C/svg%3E"); background-position: right 0 center; }
.pick select:disabled { color: #777; background-color: #b1cfee; background-image: url("data:image/svg+xml,%3Csvg xmlns='http://www.w3.org/2000/svg' width='25' height='28'%3E%3Crect x='.5' y='.5' width='24' height='27' fill='%23ccc' stroke='%23bfbfbf'/%3E%3Cpath d='M7 11L12 16L17 11' fill='none' stroke='%23999' stroke-width='1.300'/%3E%3C/svg%3E"); }
.sub-body > .actions { margin: 11px 3px 0 0; }
```
